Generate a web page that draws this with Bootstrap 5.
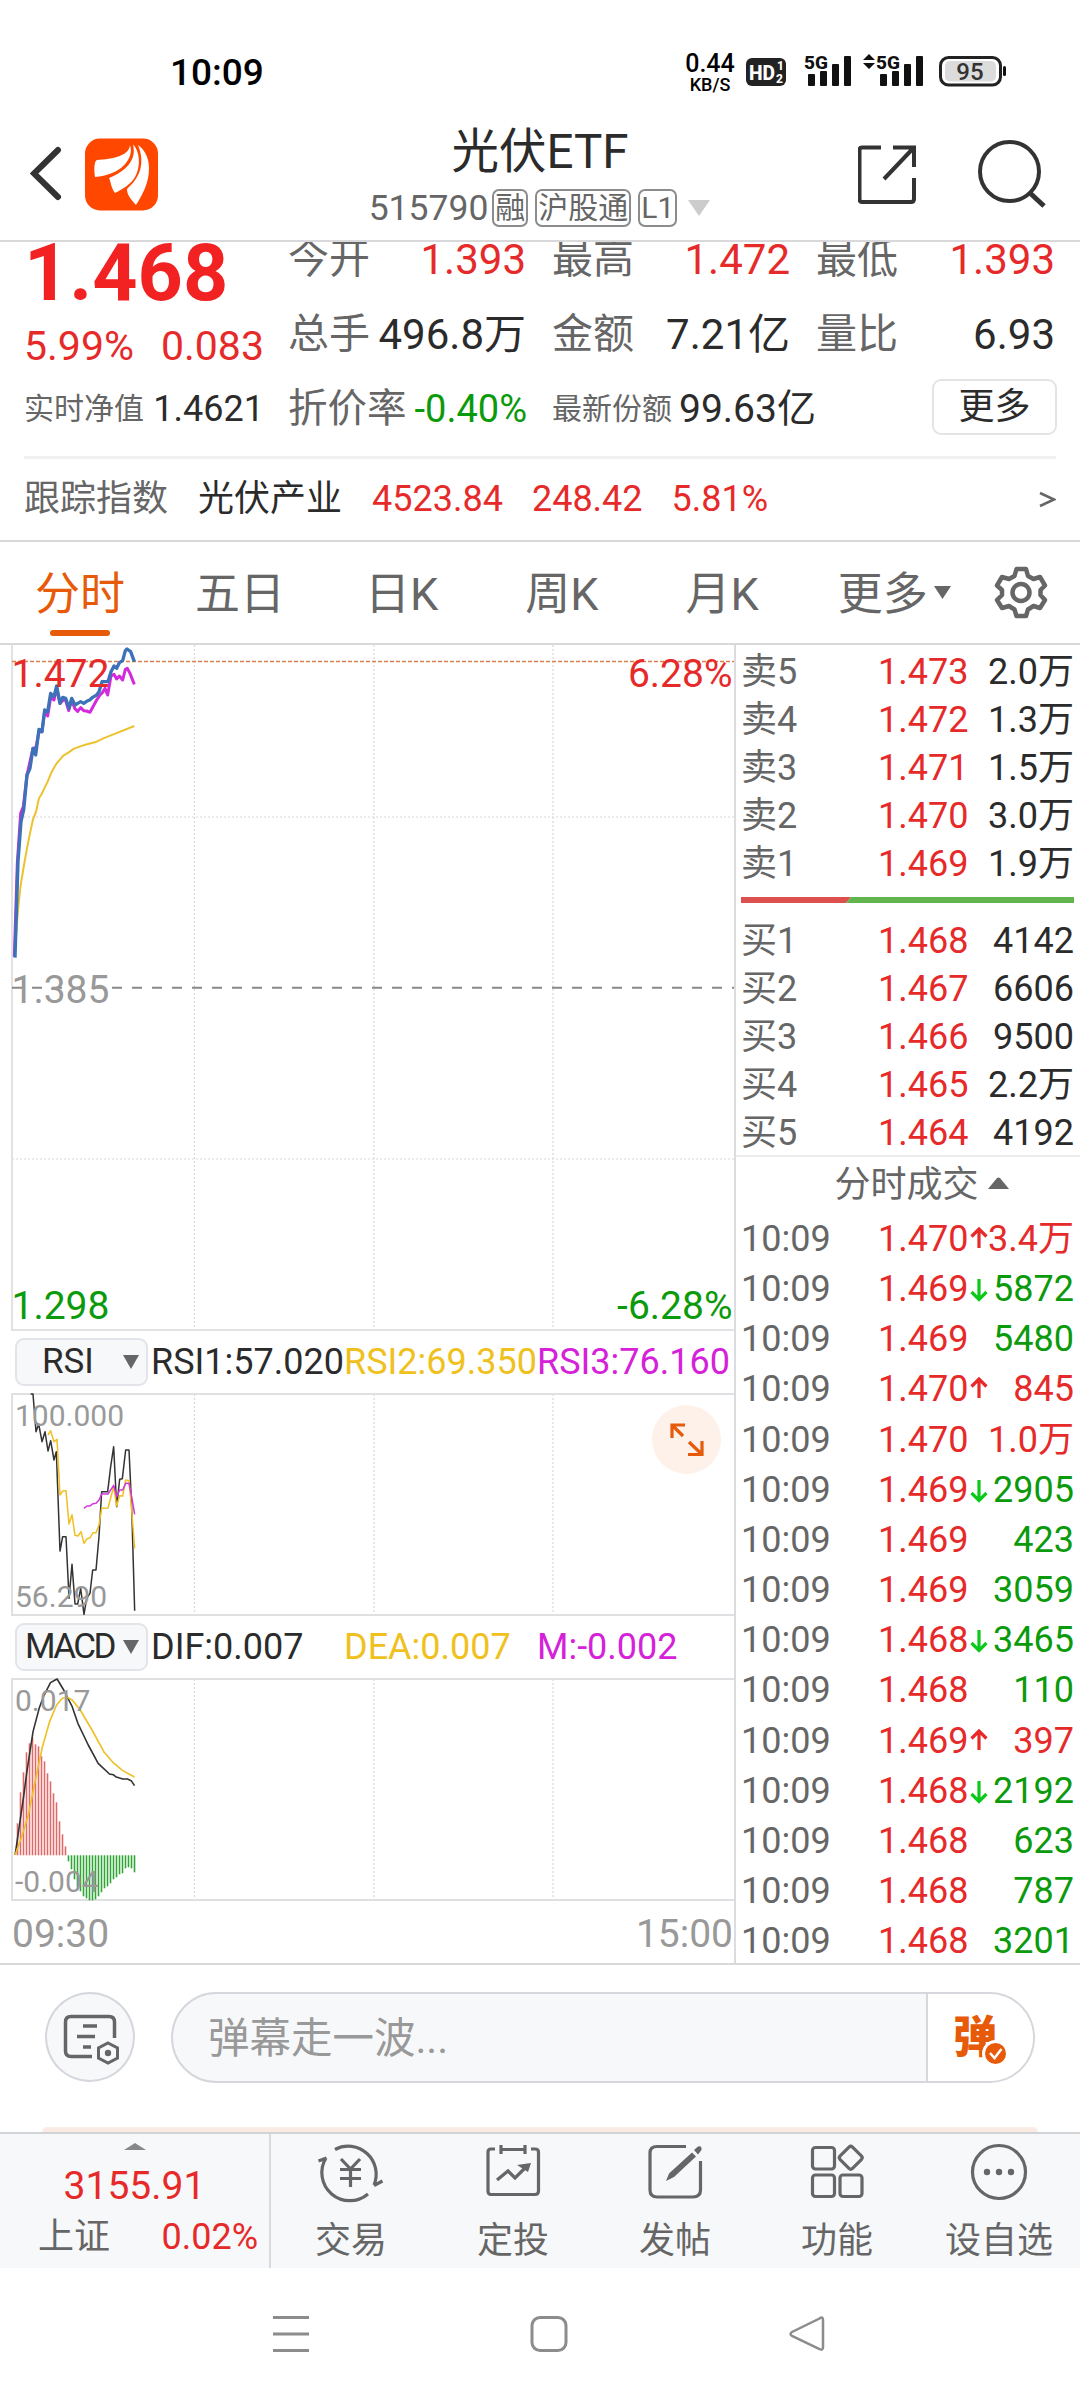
<!DOCTYPE html>
<html lang="zh-CN">
<head>
<meta charset="utf-8">
<meta name="viewport" content="width=device-width, initial-scale=1">
<title>光伏ETF 515790</title>
<link href="https://cdn.jsdelivr.net/npm/bootstrap@5.3.0/dist/css/bootstrap.min.css" rel="stylesheet">
<style>
:root{--up:#e62a2a;--down:#0b9a0b;--ink:#2b2b2b;--dim:#666;--soft:#999;--rule:#d9d9db;--accent:#e65a0a}
body{width:1080px;height:2400px;overflow:hidden;background:#fff;color:var(--ink);
  font-family:Roboto,"Noto Sans CJK SC",sans-serif;font-size:36px;line-height:48px}
svg{display:block;flex:none}
svg text{font-family:Roboto,"Noto Sans CJK SC",sans-serif}
.up{color:var(--up)}.down{color:var(--down)}.dim{color:var(--dim)}
.nw{white-space:nowrap}
.status-bar{height:120px;padding:49px 72px 0 170px;color:#000}
.clock{font-size:37px;font-weight:500}
.speed{font-size:25px;line-height:23px;font-weight:500;width:54px;margin-right:9px;margin-top:3px}
.speed span{display:block;font-size:18px;line-height:20px}
.app-head{height:122px;border-bottom:2px solid var(--rule);padding:0 30px}
.head-mid{padding-top:4px}
.head-mid h1{font-size:47.5px;line-height:56px;margin:0;font-weight:400}
.code-line{font-size:35.5px;line-height:40px;margin-top:8px;gap:7px}
.tagbox{border:2px solid #8c8c8c;border-radius:7px;font-size:30px;line-height:34px;height:38px;padding:0 1px}
.quote{height:214px;padding:0 24px;overflow:hidden}
.last-col{width:264px;flex:none}
.last-price{font-size:79px;font-weight:700;line-height:78px;color:#f32222;margin-top:-8px}
.last-chg{font-size:41px;line-height:69px;gap:27px}
.quote-cols{gap:26px;margin-top:-20px}
.pair{height:75px;line-height:75px;font-size:42px}
.pair .dim{font-size:41px}
.s30{font-size:30px!important}
.more-btn{width:125px;height:56px;line-height:50px;border:2px solid #e4e4e6;border-radius:9px;font-size:36px;padding:0;background:#fff;color:var(--ink)}
.index-row{height:84px;margin:0 24px;border-top:3px solid #f0f0f0;line-height:80px}
.chart-tabs{height:105px;border-top:2px solid var(--rule);border-bottom:2px solid var(--rule);font-size:45px;line-height:106px;color:var(--dim)}
.chart-tabs>*{flex:none}
.tab-on{color:var(--accent);position:relative}
.tab-on::after{content:"";position:absolute;left:15px;right:15px;bottom:7px;height:6px;border-radius:3px;background:var(--accent)}
.market{height:1320px;border-bottom:2px solid var(--rule)}
.charts{width:734px;flex:none}
.book{border-left:2px solid #dcdce0}
.ind-bar{height:62px;padding-left:15px;line-height:62px}
.ind-btn{width:133px;height:48px;line-height:44px;background:#f7f8fa;border:2px solid #e2e4e9;border-radius:9px;margin-right:3px;flex:none}
.ind-btn .nm{width:96px;flex:none;text-align:left;font-size:35px}
.i-cell{width:193px;font-size:36px;flex:none}
.axis{height:62px;line-height:67px;font-size:39px;color:var(--soft);padding:0 1px 0 12px}
.lv{height:48px;line-height:49px;padding:0 6px 0 5px}
.tk{height:50.17px;line-height:50px;padding:0 6px 0 5px}
.c-lab{width:136.5px;color:var(--dim)}
.c-px{width:91px;color:var(--up);text-align:right}
.c-ar{width:17px}
.c-vol{flex:1;text-align:right}
.danmu{height:166px;padding:27px 45px 0}
.round-btn{width:90px;height:90px;border:2px solid #d5d7dc;border-radius:50%;background:#f7f8fa}
.danmu-box{width:865px;height:91px;border:2px solid #d5d7dc;border-radius:46px;background:#f7f8fa;overflow:hidden;margin-left:36px;color:var(--soft);font-size:41.5px;line-height:90px}
.danmu-go{width:107px;border-left:2px solid #d5d7dc;background:#fff}
.peek{height:5px;margin:-4px 42px 0;background:#faece4;border-radius:24px 24px 0 0}
.dock{height:136px;border-top:2px solid #d2d3d6;background:#f7f8fa}
.dock-index{width:271px;flex:none;border-right:2px solid #d8dadf}
.dock-item{width:162px;flex:none;color:var(--dim);line-height:50px;margin-left:-1px;margin-right:1px}
.dock-item svg{margin-top:-2px}
.dock-item div{margin-top:4px}
.sys-nav{height:132px;padding-top:44px}
</style>
</head>
<body>
<div class="status-bar d-flex">
  <div class="clock me-auto">10:09</div>
  <div class="d-flex align-items-center" style="height:46px">
    <div class="speed text-center">0.44<span>KB/S</span></div>
    <svg width="326" height="42" viewBox="746 52 326 42" style="margin-right:-64px">
      <rect x="746" y="59" width="40" height="28" rx="6" fill="#222"/>
      <text x="749" y="81" font-size="21" font-weight="800" fill="#fff" textLength="26" lengthAdjust="spacingAndGlyphs">HD</text>
      <text x="777" y="71" font-size="12" font-weight="800" fill="#fff">1</text>
      <text x="776" y="84" font-size="12" font-weight="800" fill="#fff">2</text>
      <g fill="#111">
        <text x="804" y="70" font-size="19" font-weight="800" textLength="24" lengthAdjust="spacingAndGlyphs">5G</text>
        <rect x="808" y="75" width="7" height="12" rx="1"/><rect x="820" y="72" width="7" height="15" rx="1"/><rect x="832" y="65" width="7" height="22" rx="1"/><rect x="844" y="57" width="7" height="30" rx="1"/>
        <path d="M863 61l6-6 6 6zM863 64l6 6 6-6z"/>
        <text x="876" y="70" font-size="19" font-weight="800" textLength="24" lengthAdjust="spacingAndGlyphs">5G</text>
        <rect x="880" y="75" width="7" height="12" rx="1"/><rect x="892" y="72" width="7" height="15" rx="1"/><rect x="904" y="65" width="7" height="22" rx="1"/><rect x="916" y="57" width="7" height="30" rx="1"/>
        <rect x="1003" y="67" width="3" height="10" rx="1.5"/>
      </g>
      <rect x="940.500" y="58.500" width="60" height="27.500" rx="8" fill="#fff" stroke="#222" stroke-width="3"/>
      <rect x="945" y="62" width="51" height="20.500" rx="5" fill="#dcdcdc"/>
      <text x="970" y="80.500" font-size="24" font-weight="500" text-anchor="middle" fill="#333">95</text>
    </svg>
  </div>
</div>

<header class="app-head d-flex">
  <svg width="130" height="110" viewBox="30 120 130 110">
    <path d="M58 150L34 173.500L58 197" fill="none" stroke="#333" stroke-width="6" stroke-linecap="round"/>
    <rect x="85" y="138.500" width="73" height="72" rx="15" fill="#ff4700"/>
    <g fill="#fff">
      <path d="M130 145C129 156 113 159 97 160C94 161 94 170 95 177C106 176 114 173 121 168C128 162 133 154 130 145Z"/>
      <path d="M133 144.500C137 160 126 171 109 178C111 182 111 188 115 193C123 189 131 184 135 177C141 167 140 151 133 144.500Z"/>
      <path d="M138 145C144 160 143 175 127 189C127 196 132 200 136 205C142 195 149 184 149 168C149 157 144 149 138 145Z"/>
    </g>
  </svg>
  <div class="head-mid flex-grow-1 text-center" style="padding-left:62px">
    <h1>光伏ETF</h1>
    <div class="code-line d-flex justify-content-center align-items-center dim">
      <span style="margin-right:-3px">515790</span><span class="tagbox">融</span><span class="tagbox">沪股通</span><span class="tagbox" style="width:39px">L1</span>
      <svg width="24" height="16" viewBox="0 0 24 16" style="margin-left:3px"><path d="M1 0H23L12 16Z" fill="#ccc"/></svg>
    </div>
  </div>
  <svg width="192" height="110" viewBox="858 120 192 110" fill="none" stroke="#333" stroke-width="4">
    <path d="M881 147.500H862Q859.500 147.500 859.500 150V199Q859.500 202 862 202H911Q914 202 914 199V178M893 147.500H914V167M913 148.500L884 179"/>
    <circle cx="1009.500" cy="171.500" r="29.500"/><path d="M1030 193L1044 206" stroke-width="5"/>
  </svg>
</header>

<section class="quote">
  <div class="d-flex" style="height:148px">
    <div class="last-col">
      <div class="last-price">1.468</div>
      <div class="last-chg up d-flex nw"><span>5.99%</span><span>0.083</span></div>
    </div>
    <div class="quote-cols d-flex nw">
      <div style="width:238px">
        <div class="pair d-flex justify-content-between"><span class="dim">今开</span><span class="up">1.393</span></div>
        <div class="pair d-flex justify-content-between"><span class="dim">总手</span><span>496.8万</span></div>
      </div>
      <div style="width:238px">
        <div class="pair d-flex justify-content-between"><span class="dim">最高</span><span class="up">1.472</span></div>
        <div class="pair d-flex justify-content-between"><span class="dim">金额</span><span>7.21亿</span></div>
      </div>
      <div style="width:239px">
        <div class="pair d-flex justify-content-between"><span class="dim">最低</span><span class="up">1.393</span></div>
        <div class="pair d-flex justify-content-between"><span class="dim">量比</span><span>6.93</span></div>
      </div>
    </div>
  </div>
  <div class="d-flex align-items-center nw" style="height:38px;line-height:38px">
    <div class="d-flex justify-content-between" style="width:240px"><span class="dim s30">实时净值</span><span>1.4621</span></div>
    <div class="d-flex justify-content-between" style="width:239px;margin-left:24px"><span class="dim" style="font-size:39.500px">折价率</span><span class="down" style="font-size:38px">-0.40%</span></div>
    <div class="d-flex" style="margin-left:25px;gap:7px"><span class="dim s30">最新份额</span><span style="font-size:39px">99.63亿</span></div>
    <button class="more-btn ms-auto" type="button" style="margin-top:-5px;margin-right:-1px">更多</button>
  </div>
</section>

<div class="index-row d-flex nw">
  <span class="dim">跟踪指数</span><span style="margin-left:30px">光伏产业</span>
  <span class="up" style="margin-left:30px">4523.84</span><span class="up" style="margin-left:29px">248.42</span><span class="up" style="margin-left:29px">5.81%</span>
  <svg class="ms-auto" width="18" height="80" viewBox="1038 458 18 80"><path d="M1040 492L1054 498.500L1040 505" fill="none" stroke="#666" stroke-width="2.500"/></svg>
</div>

<nav class="chart-tabs d-flex nw">
  <span class="tab-on" style="margin-left:35px">分时</span>
  <span style="margin-left:70px">五日</span>
  <span style="margin-left:80px">日K</span>
  <span style="margin-left:87px">周K</span>
  <span style="margin-left:87px">月K</span>
  <span style="margin-left:79px">更多</span>
  <svg width="17" height="101" viewBox="934 542 17 101" style="margin-left:6px"><path d="M934 586H951L942.500 599Z" fill="#666"/></svg>
  <svg width="56" height="101" viewBox="993 542 56 101" style="margin-left:42px" fill="none" stroke="#666" stroke-width="4.500" stroke-linejoin="round">
    <path d="M1016.500 569H1026L1028 576L1033.500 579L1040 577L1045 585.500L1040.500 590V595L1045 600L1040 608L1033.500 606L1028 609.500L1026 616H1016.500L1014.500 609.500L1009 606L1002 608L997 600L1002 595V590L997 585.500L1002 577L1009 579L1014.500 576Z"/><circle cx="1021" cy="592.500" r="8.500"/>
  </svg>
</nav>

<main class="market d-flex">
  <div class="charts">
    <svg width="734" height="686" viewBox="0 645 734 686">
      <path d="M194.500 645V1329M374 645V1329M553 645V1329M12 817H734M12 1159H734" stroke="#d8d8d8" stroke-width="1.200" stroke-dasharray="2 2"/>
      <path d="M12 645V1331M11 1330H734" stroke="#e2e2e4" stroke-width="2" fill="none"/>
      <path d="M12 661.500H734" stroke="#d9804f" stroke-width="1.500" stroke-dasharray="4 2"/>
      <path d="M12 987.700H734" stroke="#888" stroke-width="2" stroke-dasharray="10 10"/>
      <g transform="translate(0 640) scale(.33333)" fill="none" stroke-linejoin="round">
        <path stroke="#ecc22e" stroke-width="6" d="M47 900L55 800L62 735L72 675L81 625L90 580L99 538L108 515L117 475L125 462L134 443L143 425L153 400L162 383L170 370L190 347L205 338L222 326L250 316L290 305L310 295L340 283L403 258"/>
        <path stroke="#d32bdc" stroke-width="9" d="M43 950L52 670L62 520L70 500L81 405L99 325L108 322L117 275L126 275L134 215L143 228L152 172L162 180L170 145L180 190L190 180L197 182L206 212L215 180L224 205L233 214L242 203L251 212L260 213L270 217L290 180L300 165L307 158L315 145L323 165L333 108L342 103L350 117L358 108L368 120L376 88L382 85L390 100L403 133"/>
        <path stroke="#3d72b8" stroke-width="10" d="M45 953L54 665L63 545L71 510L81 405L90 385L99 325L107 345L117 268L126 275L134 210L143 215L152 160L162 170L170 138L180 190L188 172L197 175L207 205L215 175L225 195L233 190L242 185L251 190L260 184L269 180L278 172L290 165L297 155L306 125L324 125L333 95L342 78L350 85L358 68L368 62L376 32L381 27L392 35L403 65"/>
      </g>
      <g font-size="39">
        <text x="11.500" y="686.500" fill="#e62a2a">1.472</text><text x="732.500" y="686.500" text-anchor="end" fill="#e62a2a">6.28%</text>
        <text x="11.500" y="1003" fill="#999">1.385</text>
        <text x="11.500" y="1319" fill="#0b9a0b">1.298</text><text x="732.500" y="1319" text-anchor="end" fill="#0b9a0b">-6.28%</text>
      </g>
    </svg>
    <div class="ind-bar d-flex align-items-center nw">
      <div class="ind-btn d-flex align-items-center"><span class="nm" style="padding-left:25px">RSI</span><svg width="16" height="14" viewBox="0 0 16 14" style="margin-left:10px"><path d="M0 0H16L8 14Z" fill="#666"/></svg></div>
      <span class="i-cell">RSI1:57.020</span><span class="i-cell" style="color:#f0c11e">RSI2:69.350</span><span class="i-cell" style="color:#d522d9">RSI3:76.160</span>
    </div>
    <svg width="734" height="223" viewBox="0 1393 734 223">
      <path d="M194.500 1394V1614M374 1394V1614M553 1394V1614" stroke="#d8d8d8" stroke-width="1.200" stroke-dasharray="2 2"/>
      <path d="M734 1394H12V1615H734" stroke="#e0e0e2" stroke-width="2" fill="none"/>
      <g transform="translate(0 1380) scale(.33333)" fill="none" stroke-width="4.500" stroke-linejoin="round">
        <path stroke="#333" d="M92 42L99 42L108 155L116 132L126 185L135 155L144 213L152 182L162 240L169 215L180 513L188 470L198 470L207 655L216 553L225 672L233 672L242 625L252 703L260 655L270 640L278 570L288 570L297 470L305 335L323 335L332 260L341 200L350 380L359 298L367 296L377 210L387 210L395 380L404 692"/>
        <path stroke="#f0bf22" d="M144 165L152 152L162 185L171 178L180 345L189 332L198 332L207 432L216 404L225 466L234 468L243 455L252 490L261 476L270 474L279 458L288 458L297 435L305 385L324 384L341 320L350 378L359 347L368 348L377 300L387 302L395 390L404 505"/>
        <path stroke="#d237d8" d="M252 385L261 378L270 378L279 371L288 370L297 360L305 342L324 342L341 316L350 350L359 330L368 330L377 310L387 310L395 350L404 403"/>
      </g>
      <g font-size="30" fill="#999"><text x="15" y="1425.500">100.000</text><text x="15" y="1606.500">56.290</text></g>
      <circle cx="686.500" cy="1439.500" r="34.500" fill="#fef1e9"/>
      <path d="M672 1438V1425H685M673 1426L683 1436M688 1454.500H702V1441M701 1453.500L689 1442" fill="none" stroke="#e65a0a" stroke-width="3.200"/>
    </svg>
    <div class="ind-bar d-flex align-items-center nw">
      <div class="ind-btn d-flex align-items-center"><span class="nm" style="padding-left:8px;letter-spacing:-2.600px">MACD</span><svg width="16" height="14" viewBox="0 0 16 14" style="margin-left:10px"><path d="M0 0H16L8 14Z" fill="#666"/></svg></div>
      <span class="i-cell">DIF:0.007</span><span class="i-cell" style="color:#f0c11e">DEA:0.007</span><span class="i-cell" style="color:#d522d9">M:-0.002</span>
    </div>
    <svg width="734" height="223" viewBox="0 1678 734 223">
      <path d="M194.500 1679V1899M374 1679V1899M553 1679V1899" stroke="#d8d8d8" stroke-width="1.200" stroke-dasharray="2 2"/>
      <path d="M734 1679H12V1900H734" stroke="#e0e0e2" stroke-width="2" fill="none"/>
      <g id="macdBars" stroke-width="1.600"></g>
      <g transform="translate(0 1600) scale(.4719 .33333)" fill="none" stroke-width="1.600" stroke-linejoin="round">
        <path vector-effect="non-scaling-stroke" stroke="#333" d="M32 765L50 590L57 515L70 395L83 325L92 290L107 248L117 240L121 237L135 270L153 320L165 370L187 435L208 490L232 522L240 524L245 530L260 537L270 537L278 542L285 557"/>
        <path vector-effect="non-scaling-stroke" stroke="#f0bf22" d="M32 765L45 715L60 645L75 540L90 440L105 365L120 315L132 295L143 292L153 300L170 330L195 390L220 455L240 488L260 512L285 531"/>
      </g>
      <g font-size="30" fill="#999"><text x="15" y="1711">0.017</text><text x="15" y="1892">-0.004</text></g>
    </svg>
    <div class="axis d-flex justify-content-between"><span>09:30</span><span>15:00</span></div>
  </div>

  <div class="book flex-grow-1 nw">
    <div id="asks" style="padding-top:3px"></div>
    <svg width="333" height="6" viewBox="741 897 333 6" style="margin:9px 0 14px 5px"><path d="M741 897H851L846 903H741Z" fill="#dd5050"/><path d="M851 897H1074V903H846Z" fill="#62b54e"/></svg>
    <div id="bids"></div>
    <div class="d-flex align-items-center justify-content-center dim" style="height:59px;border-top:2px solid #ececee;margin-top:-2px;gap:9px;padding-left:27px;line-height:59px"><span>分时成交</span><svg width="21" height="24" viewBox="0 0 21 24"><path d="M0 15L9 4Q10.500 3 12 4L21 15Z" fill="#666"/></svg></div>
    <div id="ticks"></div>
  </div>
</main>

<section class="danmu d-flex">
  <div class="round-btn d-flex align-items-center justify-content-center">
    <svg width="60" height="56" viewBox="60 2008 60 56" fill="none" stroke="#666" stroke-width="3.500">
      <path d="M92 2055.500H71Q65.500 2055.500 65.500 2050V2021Q65.500 2015.500 71 2015.500H109Q114.500 2015.500 114.500 2021V2037M83 2025H97M77 2035.500H95M83 2046H91"/>
      <path d="M108 2042L117.500 2047V2057L108 2062L98.500 2057V2047Z" stroke-width="3"/><circle cx="108" cy="2052" r="3.200" fill="#666" stroke="none"/>
    </svg>
  </div>
  <div class="danmu-box d-flex">
    <span class="flex-grow-1" style="padding-left:35px">弹幕走一波...</span>
    <div class="danmu-go">
      <svg width="105" height="87" viewBox="930 1994 105 87">
        <text x="955" y="2053" font-size="44" font-weight="900" fill="#e65a0a">弹</text>
        <circle cx="997.500" cy="2053.500" r="12" fill="#e65a0a" stroke="#fff" stroke-width="3"/><path d="M992 2053L996.500 2058L1003.500 2049" fill="none" stroke="#fff" stroke-width="2.500"/>
      </svg>
    </div>
  </div>
</section>
<div class="peek"></div>

<footer class="dock d-flex nw">
  <div class="dock-index text-center">
    <svg class="mx-auto" width="22" height="18" viewBox="0 0 22 18"><path d="M0 16L11 9L22 16Z" fill="#888"/></svg>
    <div class="up" style="font-size:39px;line-height:48px;margin-top:10px">3155.91</div>
    <div class="d-flex justify-content-between" style="padding:3px 11px 0 38px"><span class="dim">上证</span><span class="up">0.02%</span></div>
  </div>
  <div class="dock-item text-center">
    <svg class="mx-auto" width="80" height="80" viewBox="311 2132 80 80" fill="none" stroke="#666" stroke-width="3.200">
      <path d="M335 2149.500A28 28 0 0 1 374 2185M368 2194A28 28 0 0 1 326 2158M318.500 2161L326.500 2158M374 2185.500L382.500 2181"/>
      <path d="M341 2159L350.500 2169L360 2159M350.500 2169V2187M340 2169.500H361M340 2178.500H361"/>
    </svg><div>交易</div>
  </div>
  <div class="dock-item text-center">
    <svg class="mx-auto" width="80" height="80" viewBox="473 2132 80 80" fill="none" stroke="#666" stroke-width="3.200">
      <path d="M495 2149H491Q488 2149 488 2152V2191Q488 2194.500 491 2194.500H535Q538.500 2194.500 538.500 2191V2152Q538.500 2149 535 2149H531M501 2145V2154M525 2145V2154M501 2149.500H525"/>
      <path d="M497 2180L508 2171L515 2178L526 2167"/><path d="M517 2165L531 2163L528 2172Z" fill="#666" stroke="none"/>
    </svg><div>定投</div>
  </div>
  <div class="dock-item text-center">
    <svg class="mx-auto" width="80" height="80" viewBox="635 2132 80 80" fill="none" stroke="#666" stroke-width="3.200">
      <path d="M686 2146.500H657Q650 2146.500 650 2153V2190Q650 2197 657 2197H693Q700.500 2197 700.500 2190V2161"/>
      <path d="M692 2152.500L696 2156.500L674 2177L666 2181L669 2173.500ZM694 2150L698 2146.500Q702 2145 701.500 2150L698 2154.500Z" fill="#666" stroke="none"/>
    </svg><div>发帖</div>
  </div>
  <div class="dock-item text-center">
    <svg class="mx-auto" width="80" height="80" viewBox="797 2132 80 80" fill="none" stroke="#666" stroke-width="3.200">
      <rect x="812.500" y="2147.500" width="22" height="21.500" rx="3"/><rect x="812.500" y="2175" width="22" height="21.500" rx="3"/><rect x="840" y="2175" width="22" height="21.500" rx="3"/>
      <rect x="842" y="2149" width="17.500" height="17.500" rx="2.500" transform="rotate(45 850.750 2157.750)"/>
    </svg><div>功能</div>
  </div>
  <div class="dock-item text-center">
    <svg class="mx-auto" width="80" height="80" viewBox="959 2132 80 80">
      <circle cx="999" cy="2172" r="26.500" fill="none" stroke="#666" stroke-width="3.200"/><g fill="#666"><circle cx="987" cy="2172" r="3.200"/><circle cx="999" cy="2172" r="3.200"/><circle cx="1011" cy="2172" r="3.200"/></g>
    </svg><div>设自选</div>
  </div>
</footer>
<div class="sys-nav">
  <svg width="1080" height="44" viewBox="0 2312 1080 44" fill="none" stroke="#8c8c8c" stroke-width="3">
    <path d="M273 2317.500H309M273 2334H309M273 2350.500H309"/><rect x="532" y="2317.500" width="34" height="33" rx="8"/>
    <path d="M819.500 2318.500Q823 2316 823 2320V2347Q823 2351 819.500 2349L792 2336Q789 2334 792 2332Z" stroke-width="2.500"/>
  </svg>
</div>

<script src="https://cdn.jsdelivr.net/npm/bootstrap@5.3.0/dist/js/bootstrap.bundle.min.js"></script>
<script>
const asks=[['卖5','1.473','2.0万'],['卖4','1.472','1.3万'],['卖3','1.471','1.5万'],['卖2','1.470','3.0万'],['卖1','1.469','1.9万']];
const bids=[['买1','1.468','4142'],['买2','1.467','6606'],['买3','1.466','9500'],['买4','1.465','2.2万'],['买5','1.464','4192']];
const ticks=[['1.470','u','3.4万',1],['1.469','d','5872',0],['1.469','','5480',0],['1.470','u','845',1],['1.470','','1.0万',1],['1.469','d','2905',0],['1.469','','423',0],['1.469','','3059',0],['1.468','d','3465',0],['1.468','','110',0],['1.469','u','397',1],['1.468','d','2192',0],['1.468','','623',0],['1.468','','787',0],['1.468','','3201',0]];
const arrow={u:'<svg width="22" height="50" viewBox="0 0 22 50" fill="none" stroke="#e62a2a" stroke-width="3.200"><path d="M10 34V16M2.500 22.500L10 15L17.500 22.500"/></svg>',
 d:'<svg width="22" height="50" viewBox="0 0 22 50" fill="none" stroke="#0cc81a" stroke-width="3.200"><path d="M10 15V35M2.500 28L10 35.500L17.500 28"/></svg>','':''};
const level=r=>`<div class="lv d-flex"><span class="c-lab">${r[0]}</span><span class="c-px">${r[1]}</span><span class="c-vol">${r[2]}</span></div>`;
document.getElementById('asks').innerHTML=asks.map(level).join('');
document.getElementById('bids').innerHTML=bids.map(level).join('');
document.getElementById('ticks').innerHTML=ticks.map(t=>`<div class="tk d-flex"><span class="c-lab">10:09</span><span class="c-px">${t[0]}</span><span class="c-ar">${arrow[t[1]]}</span><span class="c-vol ${t[3]?'up':'down'}">${t[2]}</span></div>`).join('');
const rise=[32,63,83,103,112,118,111,109,99,94,82,74,62,53,34,21,9];
const fall=[6,14,24,32,36,41,43,45,45,44,41,37,33,31,28,24,22,19,18,13,12,13,17];
const zero=1855.300;
document.getElementById('macdBars').innerHTML=rise.map((h,i)=>`<path stroke="#e06a6a" d="M${17.5+i*3} ${zero}V${zero-h}"/>`).join('')+fall.map((h,i)=>`<path stroke="#2fa535" d="M${68.5+i*3} ${zero}V${zero+h}"/>`).join('');
</script>
</body>
</html>
